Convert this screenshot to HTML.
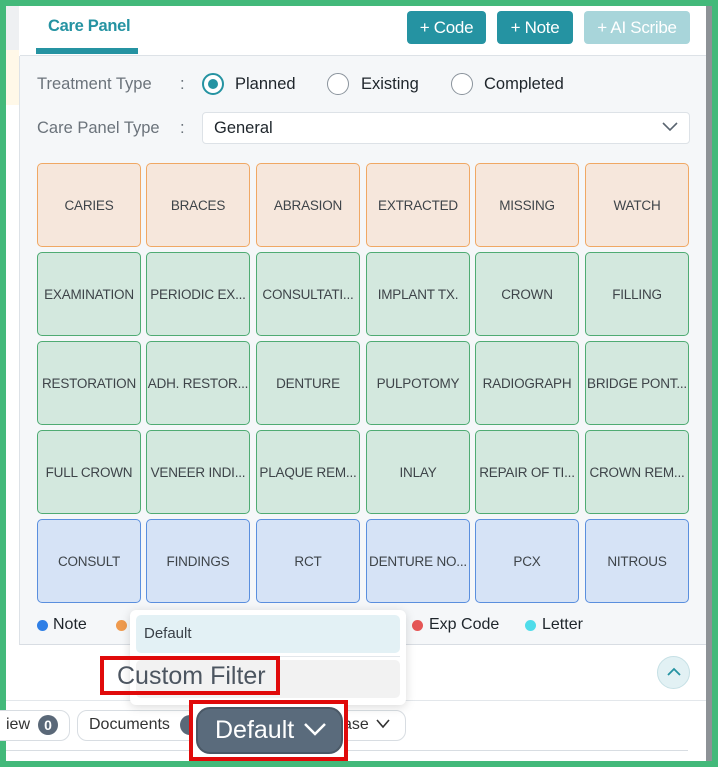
<!DOCTYPE html>
<html><head><meta charset="utf-8"><style>
*{box-sizing:border-box;margin:0;padding:0}
body{width:718px;height:767px;background:#43b97a;position:relative;overflow:hidden;font-family:"Liberation Sans",sans-serif}
.a{position:absolute}
.tile{position:absolute;width:104px;height:84px;border-radius:5px;border:1px solid;display:flex;align-items:center;justify-content:center;font-size:13.5px;color:#3e4449;white-space:nowrap;letter-spacing:-0.2px}
.o{background:#f6e7dc;border-color:#f0a864}
.g{background:#d3e8de;border-color:#4fab73}
.b{background:#d6e3f6;border-color:#5a8fde}
.btn{position:absolute;top:11px;height:33px;border-radius:4px;background:#2593a2;color:#fff;font-size:17px;display:flex;align-items:center;justify-content:center;letter-spacing:-0.3px}
.radio{position:absolute;width:22px;height:22px;border-radius:50%;border:1.5px solid #8a939c;background:#fff}
.lbl{position:absolute;font-size:16.5px;color:#1e252b}
.dot{position:absolute;width:11px;height:11px;border-radius:50%}
.leg{position:absolute;top:616px;font-size:16px;color:#1e252b}
</style></head><body>
<div class="a" style="left:6px;top:6px;width:700px;height:755px;background:#fff"></div>
<div class="a" style="left:6px;top:6px;width:13px;height:44px;background:#eef0f2"></div>
<div class="a" style="left:6px;top:50px;width:13px;height:55px;background:#fff8e8"></div>
<div class="a" style="left:706px;top:6px;width:6px;height:755px;background:#8d9296"></div>
<!-- header -->
<div class="a" style="left:20px;top:6px;width:686px;height:50px;background:#fff;border-bottom:1px solid #dde2e7"></div>
<div class="a" style="left:48px;top:17px;font-size:16.5px;font-weight:bold;color:#2593a2;letter-spacing:-0.3px">Care Panel</div>
<div class="a" style="left:36px;top:48px;width:102px;height:6px;background:#2593a2"></div>
<div class="btn" style="left:407px;width:79px">+ Code</div>
<div class="btn" style="left:497px;width:76px">+ Note</div>
<div class="btn" style="left:584px;width:106px;background:#a8d5da">+ AI Scribe</div>
<!-- panel -->
<div class="a" style="left:19px;top:56px;width:687px;height:589px;background:#f5f7f9;border-left:1px solid #dde2e7;border-bottom:1px solid #d8dde3"></div>
<div class="lbl" style="left:37px;top:75px;color:#6b737b">Treatment Type</div>
<div class="lbl" style="left:180px;top:75px;color:#6b737b">:</div>
<div class="radio" style="left:202px;top:73px;border-color:#2593a2;border-width:2px"><div class="a" style="left:4px;top:4px;width:10px;height:10px;border-radius:50%;background:#2593a2"></div></div>
<div class="lbl" style="left:235px;top:75px">Planned</div>
<div class="radio" style="left:327px;top:73px"></div>
<div class="lbl" style="left:361px;top:75px">Existing</div>
<div class="radio" style="left:451px;top:73px"></div>
<div class="lbl" style="left:484px;top:75px">Completed</div>
<div class="lbl" style="left:37px;top:119px;color:#6b737b">Care Panel Type</div>
<div class="lbl" style="left:180px;top:119px;color:#6b737b">:</div>
<div class="a" style="left:202px;top:112px;width:488px;height:32px;background:#fff;border:1px solid #dde2e7;border-radius:4px"></div>
<div class="lbl" style="left:214px;top:119px">General</div>
<svg class="a" style="left:662px;top:121px" width="16" height="12"><path d="M1 2 L8 9 L15 2" stroke="#5a6470" stroke-width="1.6" fill="none"/></svg>
<!-- tiles -->
<div class="tile o" style="left:37px;top:163px">CARIES</div>
<div class="tile o" style="left:146px;top:163px">BRACES</div>
<div class="tile o" style="left:256px;top:163px">ABRASION</div>
<div class="tile o" style="left:366px;top:163px">EXTRACTED</div>
<div class="tile o" style="left:475px;top:163px">MISSING</div>
<div class="tile o" style="left:585px;top:163px">WATCH</div>
<div class="tile g" style="left:37px;top:252px">EXAMINATION</div>
<div class="tile g" style="left:146px;top:252px">PERIODIC EX...</div>
<div class="tile g" style="left:256px;top:252px">CONSULTATI...</div>
<div class="tile g" style="left:366px;top:252px">IMPLANT TX.</div>
<div class="tile g" style="left:475px;top:252px">CROWN</div>
<div class="tile g" style="left:585px;top:252px">FILLING</div>
<div class="tile g" style="left:37px;top:341px">RESTORATION</div>
<div class="tile g" style="left:146px;top:341px">ADH. RESTOR...</div>
<div class="tile g" style="left:256px;top:341px">DENTURE</div>
<div class="tile g" style="left:366px;top:341px">PULPOTOMY</div>
<div class="tile g" style="left:475px;top:341px">RADIOGRAPH</div>
<div class="tile g" style="left:585px;top:341px">BRIDGE PONT...</div>
<div class="tile g" style="left:37px;top:430px">FULL CROWN</div>
<div class="tile g" style="left:146px;top:430px">VENEER INDI...</div>
<div class="tile g" style="left:256px;top:430px">PLAQUE REM...</div>
<div class="tile g" style="left:366px;top:430px">INLAY</div>
<div class="tile g" style="left:475px;top:430px">REPAIR OF TI...</div>
<div class="tile g" style="left:585px;top:430px">CROWN REM...</div>
<div class="tile b" style="left:37px;top:519px">CONSULT</div>
<div class="tile b" style="left:146px;top:519px">FINDINGS</div>
<div class="tile b" style="left:256px;top:519px">RCT</div>
<div class="tile b" style="left:366px;top:519px">DENTURE NO...</div>
<div class="tile b" style="left:475px;top:519px">PCX</div>
<div class="tile b" style="left:585px;top:519px">NITROUS</div>
<!-- legend -->
<div class="dot" style="left:37px;top:620px;background:#2f7fe6"></div><div class="leg" style="left:53px">Note</div>
<div class="dot" style="left:116px;top:620px;background:#ef9a4e"></div>
<div class="dot" style="left:412px;top:620px;background:#e55656"></div><div class="leg" style="left:429px">Exp Code</div>
<div class="dot" style="left:525px;top:620px;background:#4fdcea"></div><div class="leg" style="left:542px">Letter</div>
<!-- lower -->
<div class="a" style="left:6px;top:700px;width:700px;height:1px;background:#e3e7eb"></div>
<div class="a" style="left:657px;top:656px;width:33px;height:33px;border-radius:50%;background:#e2f1f4;border:1px solid #c6e0e5"></div>
<svg class="a" style="left:666px;top:666px" width="16" height="12"><path d="M2 9 L8 3 L14 9" stroke="#2593a2" stroke-width="1.8" fill="none"/></svg>
<div class="a" style="left:-20px;top:710px;width:90px;height:31px;border:1px solid #d8dde2;border-radius:10px;background:#fff"></div>
<div class="a" style="left:6px;top:716px;font-size:16px;color:#333">iew</div>
<div class="a" style="left:38px;top:715px;width:20px;height:20px;border-radius:50%;background:#5a6878;color:#fff;font-size:14px;font-weight:bold;text-align:center;line-height:20px">0</div>
<div class="a" style="left:77px;top:710px;width:329px;height:31px;border:1px solid #d8dde2;border-radius:10px;background:#fff"></div>
<div class="a" style="left:89px;top:716px;font-size:16px;color:#333">Documents</div>
<div class="a" style="left:180px;top:715px;width:20px;height:20px;border-radius:50%;background:#5a6878"></div>
<div class="a" style="left:343px;top:716px;font-size:16px;color:#333">ase</div>
<svg class="a" style="left:376px;top:719px" width="14" height="10"><path d="M1 1 L7 8 L13 1" stroke="#333" stroke-width="1.6" fill="none"/></svg>
<div class="a" style="left:6px;top:750px;width:682px;height:11px;border-top:1px solid #d8dde2"></div>
<!-- dropdown -->
<div class="a" style="left:130px;top:610px;width:276px;height:95px;background:#fff;border-radius:6px;box-shadow:0 2px 10px rgba(0,0,0,.15)"></div>
<div class="a" style="left:136px;top:615px;width:264px;height:38px;background:#e3f1f5;border-radius:5px"></div>
<div class="a" style="left:144px;top:625px;font-size:15px;color:#3a4148">Default</div>
<div class="a" style="left:136px;top:656px;width:264px;height:1px;background:#e3e7eb"></div>
<div class="a" style="left:136px;top:660px;width:264px;height:38px;background:#f2f2f2;border-radius:5px"></div>
<div class="a" style="left:100px;top:656px;width:180px;height:39px;border:4px solid #e00a0a"></div>
<div class="a" style="left:117px;top:662px;font-size:25px;color:#4c5560">Custom Filter</div>
<div class="a" style="left:189px;top:700px;width:159px;height:61px;border:4px solid #e00a0a;background:#fff"></div>
<div class="a" style="left:196px;top:707px;width:147px;height:47px;background:#5a6b7c;border-radius:14px;border:2px solid #4a5866"></div>
<div class="a" style="left:215px;top:716px;font-size:25px;color:#fff">Default</div>
<svg class="a" style="left:303px;top:721px" width="24" height="16"><path d="M2 3 L12 13 L22 3" stroke="#fff" stroke-width="2.5" fill="none"/></svg>
</body></html>
